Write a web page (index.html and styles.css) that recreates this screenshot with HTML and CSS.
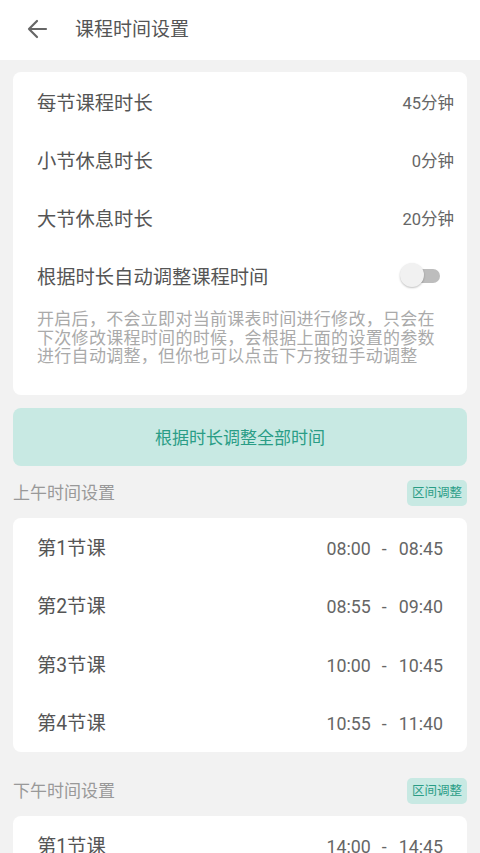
FILE: index.html
```html
<!DOCTYPE html>
<html lang="zh-CN">
<head>
<meta charset="utf-8">
<link rel="stylesheet" href="styles.css">
</head>
<body>
<header class="topbar">
  <svg class="back" width="22" height="22" viewBox="0 0 22 22"><path d="M20 11H3M11 3L3 11l8 8" fill="none" stroke="#666" stroke-width="2.2" stroke-linecap="round" stroke-linejoin="round"/></svg>
  <div class="title">课程时间设置</div>
</header>
<main class="content">
  <section class="card settings">
    <div class="row"><span class="label">每节课程时长</span><span class="value">45分钟</span></div>
    <div class="row"><span class="label">小节休息时长</span><span class="value">0分钟</span></div>
    <div class="row"><span class="label">大节休息时长</span><span class="value">20分钟</span></div>
    <div class="row toggle-row"><span class="label">根据时长自动调整课程时间</span><span class="switch"><span class="track"></span><span class="thumb"></span></span></div>
    <p class="desc">开启后，不会立即对当前课表时间进行修改，只会在下次修改课程时间的时候，会根据上面的设置的参数进行自动调整，但你也可以点击下方按钮手动调整</p>
  </section>
  <div class="btn">根据时长调整全部时间</div>
  <div class="sec-head"><span class="sec-title">上午时间设置</span><span class="badge">区间调整</span></div>
  <section class="card times">
    <div class="trow"><span class="label">第1节课</span><span class="time">08:00<span class="dash">-</span>08:45</span></div>
    <div class="trow"><span class="label">第2节课</span><span class="time">08:55<span class="dash">-</span>09:40</span></div>
    <div class="trow"><span class="label">第3节课</span><span class="time">10:00<span class="dash">-</span>10:45</span></div>
    <div class="trow"><span class="label">第4节课</span><span class="time">10:55<span class="dash">-</span>11:40</span></div>
  </section>
  <div class="sec-head second"><span class="sec-title">下午时间设置</span><span class="badge">区间调整</span></div>
  <section class="card times">
    <div class="trow"><span class="label">第1节课</span><span class="time">14:00<span class="dash">-</span>14:45</span></div>
  </section>
</main>
</body>
</html>
```
FILE: styles.css
```css
* { box-sizing: border-box; }
html, body { margin: 0; padding: 0; }
body {
  width: 480px;
  height: 853px;
  overflow: hidden;
  background: #f2f2f2;
  font-family: Roboto, "Noto Sans CJK SC", sans-serif;
  color: #555;
}
.topbar {
  height: 60px;
  background: #fff;
  display: flex;
  align-items: center;
  padding-left: 26px;
}
.back { display: block; margin-top: -2px; }
.title {
  margin-left: 27px;
  font-size: 19px;
  color: #555;
  line-height: 24px;
}
.content { padding: 12px 13px 0; }
.card {
  background: #fff;
  border-radius: 8px;
}
.settings { padding: 1px 13px 29px 24px; }
.row {
  height: 58px;
  padding-top: 3px;
  display: flex;
  align-items: center;
  justify-content: space-between;
}
.label { font-size: 19.3px; color: #555; line-height: 24px; }
.value { font-size: 16.5px; color: #666; line-height: 22px; }
.switch {
  position: relative;
  width: 42px;
  height: 26px;
  margin-right: 12px;
  margin-top: -3px;
}
.track {
  position: absolute;
  left: 6px; top: 6px;
  width: 34px; height: 14px;
  border-radius: 7px;
  background: #bdbdbd;
}
.thumb {
  position: absolute;
  left: 0; top: 0;
  width: 24px; height: 24px;
  border-radius: 50%;
  background: #f1f1f1;
  box-shadow: 0 1px 2px rgba(0,0,0,0.25);
}
.desc {
  margin: 5px 17px 0 0;
  font-size: 17px;
  line-height: 18.6px;
  color: #aaa;
  letter-spacing: 0.3px;
}
.btn {
  margin-top: 13px;
  height: 58px;
  border-radius: 8px;
  background: #c8e9e3;
  color: #2a9d86;
  font-size: 17px;
  display: flex;
  align-items: center;
  justify-content: center;
}
.sec-head {
  margin-top: 14px;
  height: 26px;
  display: flex;
  align-items: center;
  justify-content: space-between;
}
.sec-head.second { margin-top: 26px; }
.sec-title { font-size: 17px; color: #999; line-height: 22px; }
.badge {
  background: #c8e9e3;
  color: #2a9d86;
  font-size: 12.5px;
  line-height: 26px;
  height: 26px;
  padding: 0 5px;
  border-radius: 5px;
}
.times { margin-top: 12px; padding: 0 24px; }
.trow {
  height: 58.5px;
  padding-top: 3px;
  display: flex;
  align-items: center;
  justify-content: space-between;
}
.time { font-size: 17.8px; color: #666; line-height: 22px; }
.dash { margin: 0 12px 0 11px; }
```
